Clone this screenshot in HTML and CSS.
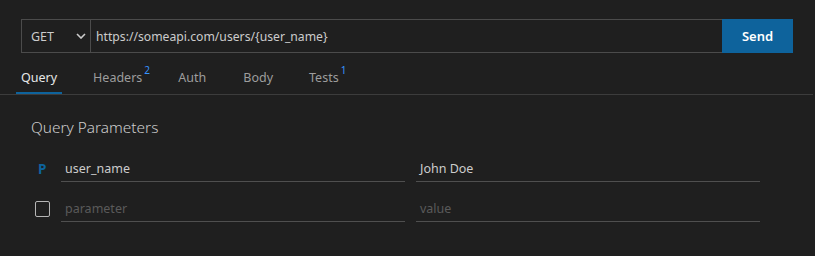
FILE: index.html
```html
<!DOCTYPE html>
<html>
<head>
<meta charset="utf-8">
<link rel="stylesheet" href="styles.css">
</head>
<body>
<div class="toolbar">
  <div class="urlbox">
    <div class="method">
      <span>GET</span>
      <svg class="chev" width="10" height="6" viewBox="0 0 10 6"><path d="M1 1 L5 5 L9 1" fill="none" stroke="#cccccc" stroke-width="1.6"/></svg>
    </div>
    <div class="url">https://someapi.com/users/{user_name}</div>
  </div>
  <button class="send">Send</button>
</div>
<div class="tabs">
  <div class="tab active">Query</div>
  <div class="tab">Headers<sup>2</sup></div>
  <div class="tab">Auth</div>
  <div class="tab">Body</div>
  <div class="tab">Tests<sup>1</sup></div>
</div>
<div class="section">
  <div class="heading">Query Parameters</div>
  <div class="params">
    <div class="row">
      <div class="icon"><span class="pmark">P</span></div>
      <div class="field">user_name</div>
      <div class="field">John Doe</div>
    </div>
    <div class="row">
      <div class="icon"><span class="check"></span></div>
      <div class="field ph">parameter</div>
      <div class="field ph">value</div>
    </div>
  </div>
</div>
</body>
</html>
```
FILE: styles.css
```css
html, body {
  margin: 0;
  background: #1f1f1f;
  font-family: "Segoe UI", "Noto Sans", "Open Sans", sans-serif;
  font-size: 12.5px;
  color: #cccccc;
}
.toolbar {
  display: flex;
  padding: 19px 22px 0 21px;
  height: 34px;
}
.urlbox {
  flex: 1;
  display: flex;
  border: 1px solid #4b4b4b;
  border-right: none;
  box-sizing: border-box;
  height: 34px;
}
.method {
  width: 69px;
  border-right: 1px solid #4b4b4b;
  display: flex;
  align-items: center;
  padding-left: 9px;
  box-sizing: border-box;
  color: #cccccc;
}
.method span { flex: 1; }
.chev { margin-right: 4px; }
.url {
  display: flex;
  align-items: center;
  padding-left: 5px;
  font-size: 12.2px;
  color: #cccccc;
}
.send {
  width: 71px;
  height: 34px;
  border: none;
  background: #0e639c;
  color: #ffffff;
  font-family: inherit;
  font-size: 13px;
  font-weight: 600;
  padding: 0;
}
.tabs {
  display: flex;
  padding-left: 16px;
  border-bottom: 1px solid #3c3c3c;
  margin-right: 2px;
}
.tab {
  position: relative;
  padding: 16px 5px 6px;
  line-height: 17px;
  border-bottom: 2px solid transparent;
  color: #9d9d9d;
  margin-right: 26px;
}
.tab:nth-child(2) { margin-right: 26px; }
.tab:nth-child(3) { margin-right: 27px; }
.tab.active {
  color: #e7e7e7;
  border-bottom-color: #0e639c;
}
.tab sup {
  position: absolute;
  top: 11px;
  left: calc(100% - 3px);
  font-size: 10px;
  color: #3794ff;
  line-height: 12px;
}
.section {
  padding: 22px 0 0 31px;
}
.heading {
  font-size: 15.4px;
  line-height: 22px;
  font-weight: 300;
  color: #cccccc;
}
.params {
  margin-top: 16px;
  display: flex;
  flex-direction: column;
  gap: 13px;
}
.row {
  display: grid;
  grid-template-columns: 19px 344px 344px;
  column-gap: 11px;
  height: 27px;
}
.icon {
  display: flex;
  align-items: center;
  padding-left: 4px;
}
.pmark {
  color: #0e639c;
  font-weight: 700;
  font-size: 13.5px;
  padding-left: 3px;
}
.check {
  width: 16px;
  height: 16px;
  box-sizing: border-box;
  border: 1px solid #b5b5b5;
  border-radius: 2px;
}
.field {
  border-bottom: 1px solid #4f4f4f;
  padding-left: 4px;
  display: flex;
  align-items: center;
  color: #cccccc;
}
.field.ph { color: #5a5a5a; }
```
